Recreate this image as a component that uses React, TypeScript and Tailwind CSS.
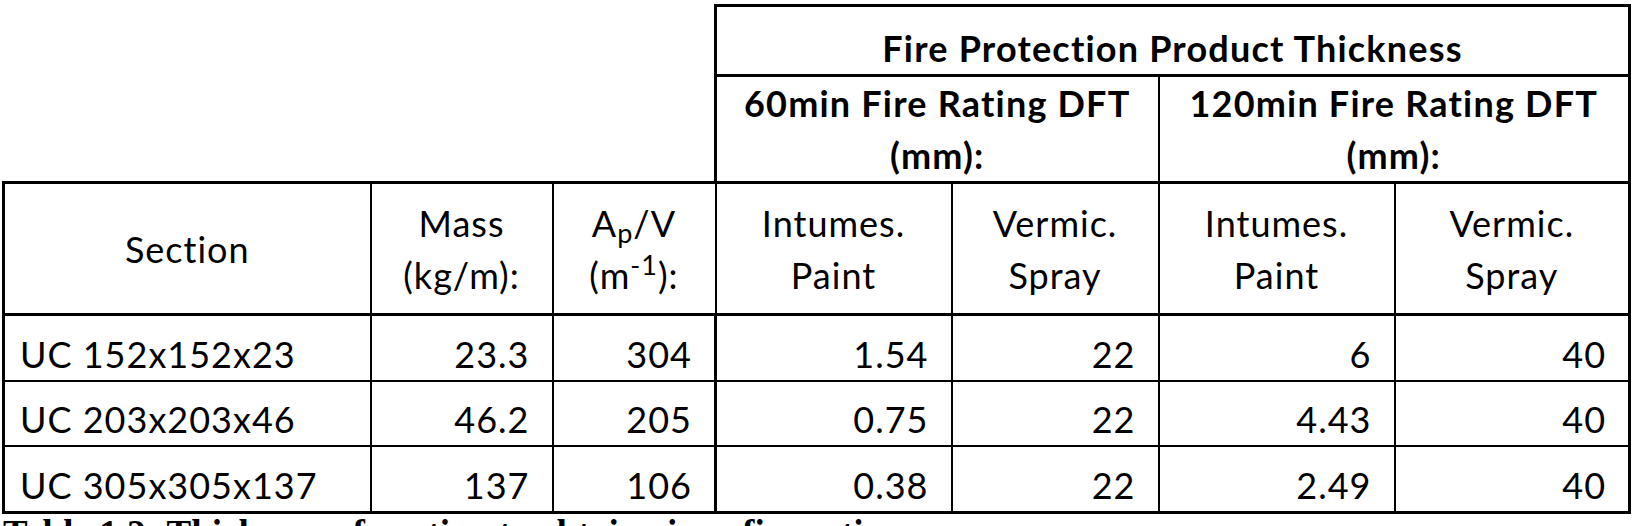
import React from "react";

const rows = [
  ["UC 152x152x23", "23.3", "304", "1.54", "22", "6", "40"],
  ["UC 203x203x46", "46.2", "205", "0.75", "22", "4.43", "40"],
  ["UC 305x305x137", "137", "106", "0.38", "22", "2.49", "40"],
];

const colWidths = ["w-[367px]", "w-[182px]", "w-[163px]", "w-[236px]", "w-[207px]", "w-[236px]", "w-[235px]"];

function HeadCell({ children, className = "" }: { children: React.ReactNode; className?: string }) {
  return (
    <th className={`border-2 border-t-[3px] border-b-[3px] border-black px-2 text-center align-middle font-normal leading-[52px] ${className}`}>
      {children}
    </th>
  );
}

export default function App() {
  return (
    <div className="min-h-screen w-[1651px] overflow-hidden bg-white pl-[2px] pt-[4px] font-['Lato',sans-serif] text-[36px] tracking-[1px] text-black">
      <table className="w-[1628px] table-fixed border-collapse">
        <colgroup>
          {colWidths.map((w, i) => (
            <col key={i} className={w} />
          ))}
        </colgroup>
        <thead>
          <tr className="h-[70px]">
            <th colSpan={3} rowSpan={2} className="border-none" />
            <th colSpan={4} className="border-[3px] border-black pb-[5px] text-center align-bottom font-bold leading-[42px] tracking-[1.2px]">
              Fire Protection Product Thickness
            </th>
          </tr>
          <tr className="h-[106px]">
            <th colSpan={2} className="border-[3px] border-r-2 border-black text-center align-middle font-bold leading-[52px] tracking-[1.2px]">
              60min Fire Rating DFT
              <br />
              (mm):
            </th>
            <th colSpan={2} className="border-[3px] border-l-2 border-black text-center align-middle font-bold leading-[52px] tracking-[1.2px]">
              120min Fire Rating DFT
              <br />
              (mm):
            </th>
          </tr>
          <tr className="h-[132px]">
            <HeadCell className="border-l-[3px]">Section</HeadCell>
            <HeadCell>
              Mass
              <br />
              (kg/m):
            </HeadCell>
            <HeadCell>
              A<sub>p</sub>/V
              <br />
              (m<sup>-1</sup>):
            </HeadCell>
            <HeadCell>
              Intumes.
              <br />
              Paint
            </HeadCell>
            <HeadCell>
              Vermic.
              <br />
              Spray
            </HeadCell>
            <HeadCell>
              Intumes.
              <br />
              Paint
            </HeadCell>
            <HeadCell className="border-r-[3px]">
              Vermic.
              <br />
              Spray
            </HeadCell>
          </tr>
        </thead>
        <tbody>
          {rows.map((r, ri) => (
            <tr key={ri} className={ri === 1 ? "h-[65px]" : ri === 2 ? "h-[67px]" : "h-[66px]"}>
              {r.map((v, ci) => (
                <td
                  key={ci}
                  className={[
                    "border-2 border-black pb-[5px] align-bottom leading-[42px]",
                    ci === 0 ? "border-l-[3px] pl-[15px] text-left" : "pr-[22px] text-right",
                    ci === 3 ? "border-l-[3px]" : "",
                    ci === 6 ? "border-r-[3px]" : "",
                    ri === rows.length - 1 ? "border-b-[3px]" : "",
                  ].join(" ")}
                >
                  {v}
                </td>
              ))}
            </tr>
          ))}
        </tbody>
      </table>
      <div className="mt-[1px] whitespace-nowrap pl-[1px] font-['Liberation_Serif',serif] text-[37px] font-bold leading-none tracking-normal">
        Table 1.2: Thickness of coating to obtain given fire ratings
      </div>
    </div>
  );
}
